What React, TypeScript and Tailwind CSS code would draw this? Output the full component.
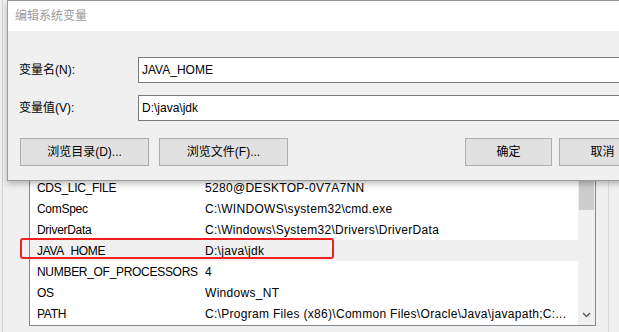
import React from "react";

const font = { fontFamily: '"Liberation Sans", "Noto Sans CJK SC", sans-serif' };

const rows: [string, string][] = [
  ["ACSvcPort", "17532"],
  ["ACSvcPort", "17532"],
  ["asl.log", "Destination=file"],
  ["ALLUSERSPROFILE", "C:\\ProgramData"],
  ["CLASSPATH", ".;%JAVA_HOME%\\lib"],
  ["CommonProgramFiles", "C:\\Program Files\\Common Files"],
  ["COMPUTERNAME", "DESKTOP-0V7A7NN"],
  ["CDS_LIC_FILE", "5280@DESKTOP-0V7A7NN"],
  ["ComSpec", "C:\\WINDOWS\\system32\\cmd.exe"],
  ["DriverData", "C:\\Windows\\System32\\Drivers\\DriverData"],
  ["JAVA_HOME", "D:\\java\\jdk"],
  ["NUMBER_OF_PROCESSORS", "4"],
  ["OS", "Windows_NT"],
  ["PATH", "C:\\Program Files (x86)\\Common Files\\Oracle\\Java\\javapath;C:..."],
];

export default function App() {
  return (
    <div
      className="relative w-[619px] h-[332px] overflow-hidden bg-[#f0f0f0] text-[12px] text-black"
      style={font}
    >
      {/* background window */}
      <div className="flex h-full">
        <div className="w-[3px] border-r border-[#d0d0d0]" />
        <div className="pl-[26px] pt-[29px]">
          <div className="flex w-[567px] h-[297px] border border-[#828790] bg-white">
            <div className="flex-1 flex flex-col overflow-hidden">
              {rows.map(([k, v], i) => (
                <div
                  key={i}
                  className={`flex h-[21px] items-center shrink-0 ${k === "JAVA_HOME" ? "bg-[#f0f0f0]" : ""}`}
                >
                  <div className="w-[175px] shrink-0 pl-[7px] whitespace-nowrap tracking-[-0.3px]">{k}</div>
                  <div className="flex-1 whitespace-nowrap overflow-hidden tracking-[0.3px]">{v}</div>
                </div>
              ))}
            </div>
            <div className="w-[17px] bg-[#f0f0f0] flex flex-col items-center justify-between">
              <div className="w-[15px] h-[180px] bg-[#cdcdcd]" />
              <svg width="9" height="6" viewBox="0 0 9 6" className="mb-[7px]">
                <path d="M1 1 L4.5 4.5 L8 1" stroke="#606060" strokeWidth="1.5" fill="none" />
              </svg>
            </div>
          </div>
        </div>
        <div className="ml-[12px] w-[1px] h-full bg-[#dadada]" />
      </div>

      {/* red highlight */}
      <div className="absolute left-[20px] top-[238px] w-[314px] h-[21px] border-2 border-[#f0201e] rounded-[3px]" />

      {/* edit dialog */}
      <div className="absolute left-[7px] top-0 w-[640px] h-[181px] border-l border-t border-b border-[#9a9a9a] bg-[#f0f0f0] shadow-[0_3px_6px_rgba(0,0,0,0.25)] flex flex-col">
        <div className="h-[30px] bg-white flex items-center pl-[7px] text-[#9b9b9b]">
          <span>编辑系统变量</span>
        </div>
        <div className="flex flex-col pl-[11px] pt-[26px]">
          <div className="flex items-center">
            <div className="w-[119px]"><span>变量名(N):</span></div>
            <div className="flex-1 h-[26px] border border-[#7a7a7a] bg-white flex items-center pl-[3px]">
              <span>JAVA_HOME</span>
            </div>
          </div>
          <div className="flex items-center mt-[12px]">
            <div className="w-[119px]"><span>变量值(V):</span></div>
            <div className="flex-1 h-[26px] border border-[#7a7a7a] bg-white flex items-center pl-[3px]">
              <span>D:\java\jdk</span>
            </div>
          </div>
          <div className="flex mt-[17px] pl-[1px]">
            <div className="w-[129px] h-[28px] border border-[#adadad] bg-[#e1e1e1] flex items-center justify-center">
              <span>浏览目录(D)...</span>
            </div>
            <div className="ml-[10px] w-[129px] h-[28px] border border-[#adadad] bg-[#e1e1e1] flex items-center justify-center">
              <span>浏览文件(F)...</span>
            </div>
            <div className="ml-[177px] w-[87px] h-[28px] border border-[#adadad] bg-[#e1e1e1] flex items-center justify-center">
              <span>确定</span>
            </div>
            <div className="ml-[7px] w-[87px] h-[28px] border border-[#adadad] bg-[#e1e1e1] flex items-center justify-center">
              <span>取消</span>
            </div>
          </div>
        </div>
      </div>
    </div>
  );
}
